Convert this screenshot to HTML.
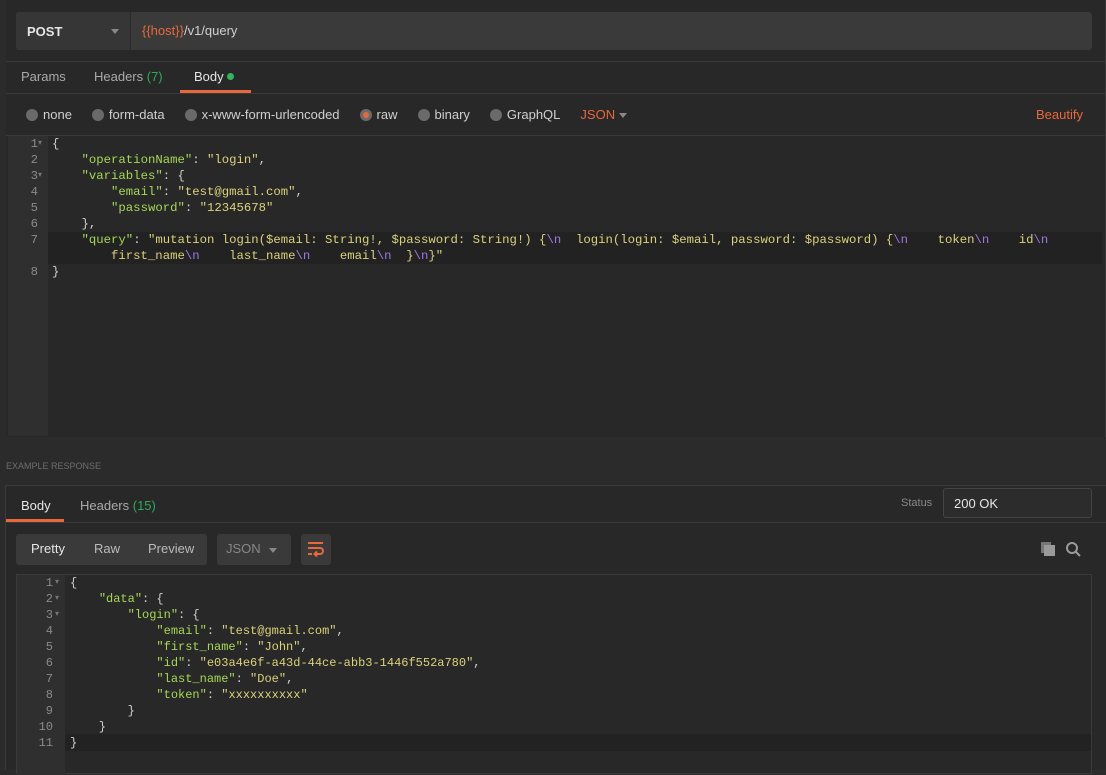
<!DOCTYPE html>
<html><head><meta charset="utf-8"><style>
*{margin:0;padding:0;box-sizing:border-box}
body{width:1106px;height:770px;background:#2b2b2b;font-family:"Liberation Sans",sans-serif;font-size:12.5px;color:#ccc;position:relative;overflow:hidden}
.abs{position:absolute}
.mono{font-family:"Liberation Mono",monospace;font-size:12px;white-space:pre}
.k{color:#a6d854}.p{color:#d0d0d0}.e{color:#9d76e8}.str{color:#dcd27a}
.ln{color:#8a8a8a;text-align:right}
.radio{display:inline-block;width:12px;height:12px;border-radius:50%;background:#6a6a6a;vertical-align:-2px;margin-right:5px}
</style></head><body>
<div class="abs" style="left:0;top:0;width:1106px;height:437px;background:#282828;border-right:1px solid #3a3a3a"></div>
<div class="abs" style="left:0;top:0;width:6px;height:437px;background:#2b2b2b"></div>
<div class="abs" style="left:16px;top:12px;width:1076px;height:38px;background:#3a3a3a;border-radius:3px"></div>
<div class="abs" style="left:16px;top:12px;width:115px;height:38px;background:#363636;border-radius:3px 0 0 3px;border-right:1px solid #2a2a2a"></div>
<div class="abs" style="left:27px;top:24px;color:#e6e6e6;font-weight:bold;font-size:13px">POST</div>
<div class="abs" style="left:111px;top:29px;border-left:4px solid transparent;border-right:4px solid transparent;border-top:5px solid #888"></div>
<div class="abs" style="left:142px;top:23px;color:#d0d0d0;font-size:13px"><span style="color:#e8683c">{{host}}</span>/v1/query</div>
<div class="abs" style="left:6px;top:61px;width:1100px;height:1px;background:#3a3a3a"></div>
<div class="abs" style="left:21px;top:69px;color:#aaa;font-size:13px">Params</div>
<div class="abs" style="left:94px;top:69px;color:#aaa;font-size:13px">Headers <span style="color:#2eaa5a">(7)</span></div>
<div class="abs" style="left:194px;top:69px;color:#e6e6e6;font-size:13px">Body <span style="display:inline-block;width:7px;height:7px;border-radius:50%;background:#2eb85c;vertical-align:1px"></span></div>
<div class="abs" style="left:180px;top:90px;width:71px;height:3px;background:#e8683c"></div>
<div class="abs" style="left:6px;top:93px;width:1100px;height:1px;background:#3a3a3a"></div>
<div class="abs" style="left:26px;top:107px;color:#d0d0d0;font-size:13px;white-space:nowrap">
<span class="radio"></span>none<span style="margin-left:20px" class="radio"></span>form-data<span style="margin-left:20px" class="radio"></span>x-www-form-urlencoded<span style="margin-left:20px;position:relative" class="radio"><span style="position:absolute;left:3px;top:3px;width:6px;height:6px;border-radius:50%;background:#e8683c"></span></span>raw<span style="margin-left:20px" class="radio"></span>binary<span style="margin-left:20px" class="radio"></span>GraphQL<span style="margin-left:20px;color:#e8683c">JSON</span></div>
<div class="abs" style="left:619px;top:113px;border-left:4px solid transparent;border-right:4px solid transparent;border-top:5px solid #888"></div>
<div class="abs" style="left:1036px;top:107px;color:#e8683c;font-size:13px">Beautify</div>
<div class="abs" style="left:6px;top:135px;width:1100px;height:1px;background:#3a3a3a"></div>
<div class="abs" style="left:8px;top:136px;width:40px;height:300px;background:#2f2f2f"></div>
<div class="abs" style="left:48px;top:232px;width:1054px;height:32px;background:#222"></div>
<div class="abs mono ln" style="left:8px;top:136px;width:30px;line-height:16px;font-size:12.3px">1
2
3
4
5
6
7

8</div>
<div class="abs mono" style="left:38px;top:136px;line-height:16px;color:#777;font-size:8px">▾

▾</div>
<div class="abs mono p" style="left:52px;top:136px;line-height:16px;font-size:12.3px">{
    <span class="k">"operationName"</span>: <span class="str">"login"</span>,
    <span class="k">"variables"</span>: {
        <span class="k">"email"</span>: <span class="str">"test@gmail.com"</span>,
        <span class="k">"password"</span>: <span class="str">"12345678"</span>
    },
    <span class="k">"query"</span>: <span class="str">"mutation login($email: String!, $password: String!) {<span class="e">\n</span>  login(login: $email, password: $password) {<span class="e">\n</span>    token<span class="e">\n</span>    id<span class="e">\n</span></span>
<span class="str">        first_name<span class="e">\n</span>    last_name<span class="e">\n</span>    email<span class="e">\n</span>  }<span class="e">\n</span>}"</span>
}</div>
<div class="abs" style="left:6px;top:461px;color:#6d6d6d;font-size:9px">EXAMPLE RESPONSE</div>
<div class="abs" style="left:5px;top:485px;width:1101px;height:285px;background:#282828;border-top:1px solid #3a3a3a;border-left:1px solid #3a3a3a"></div>
<div class="abs" style="left:21px;top:498px;color:#e6e6e6;font-size:13px">Body</div>
<div class="abs" style="left:80px;top:498px;color:#aaa;font-size:13px">Headers <span style="color:#2eaa5a">(15)</span></div>
<div class="abs" style="left:6px;top:519px;width:58px;height:3px;background:#e8683c"></div>
<div class="abs" style="left:6px;top:522px;width:1100px;height:1px;background:#3a3a3a"></div>
<div class="abs" style="left:901px;top:497px;color:#888;font-size:11px">Status</div>
<div class="abs" style="left:943px;top:488px;width:149px;height:30px;border:1px solid #444;border-radius:3px;background:#2c2c2c;color:#e6e6e6;padding:7px 10px;font-size:13px">200 OK</div>
<div class="abs" style="left:16px;top:534px;width:191px;height:31px;background:#3a3a3a;border-radius:3px"></div>
<div class="abs" style="left:31px;top:541px;color:#e6e6e6;font-size:13px">Pretty</div>
<div class="abs" style="left:94px;top:541px;color:#bbb;font-size:13px">Raw</div>
<div class="abs" style="left:148px;top:541px;color:#bbb;font-size:13px">Preview</div>
<div class="abs" style="left:217px;top:534px;width:74px;height:31px;background:#3a3a3a;border-radius:3px"></div>
<div class="abs" style="left:226px;top:541px;color:#888;font-size:13px">JSON</div>
<div class="abs" style="left:269px;top:548px;border-left:4px solid transparent;border-right:4px solid transparent;border-top:5px solid #888"></div>
<div class="abs" style="left:301px;top:534px;width:30px;height:31px;background:#3a3a3a;border-radius:3px"></div>
<svg class="abs" style="left:306px;top:540px" width="20" height="20" viewBox="0 0 20 20" fill="none" stroke="#e8683c" stroke-width="2"><path d="M2 3H17M2 8H14a3 3 0 0 1 0 6H9M11 11.5L8.5 14L11 16.5M2 14H6"/></svg>
<svg class="abs" style="left:1040px;top:541px" width="16" height="16"><rect x="1" y="1" width="10" height="11" fill="#777"/><rect x="4" y="4" width="11" height="11" fill="#9a9a9a"/></svg>
<svg class="abs" style="left:1065px;top:541px" width="16" height="16" fill="none" stroke="#9a9a9a" stroke-width="2"><circle cx="7" cy="7" r="5"/><path d="M10.5 10.5L15 15"/></svg>
<div class="abs" style="left:16px;top:574px;width:1076px;height:200px;border:1px solid #3a3a3a;background:#282828"></div>
<div class="abs" style="left:17px;top:575px;width:48px;height:200px;background:#2f2f2f"></div>
<div class="abs" style="left:65px;top:734px;width:1026px;height:17px;background:#222"></div>
<div class="abs mono ln" style="left:17px;top:575px;width:36px;line-height:16px">1
2
3
4
5
6
7
8
9
10
11</div>
<div class="abs mono" style="left:55px;top:575px;line-height:16px;color:#777;font-size:8px">▾
▾
▾</div>
<div class="abs mono p" style="left:70px;top:575px;line-height:16px">{
    <span class="k">"data"</span>: {
        <span class="k">"login"</span>: {
            <span class="k">"email"</span>: <span class="str">"test@gmail.com"</span>,
            <span class="k">"first_name"</span>: <span class="str">"John"</span>,
            <span class="k">"id"</span>: <span class="str">"e03a4e6f-a43d-44ce-abb3-1446f552a780"</span>,
            <span class="k">"last_name"</span>: <span class="str">"Doe"</span>,
            <span class="k">"token"</span>: <span class="str">"xxxxxxxxxx"</span>
        }
    }
}</div>
</body></html>
